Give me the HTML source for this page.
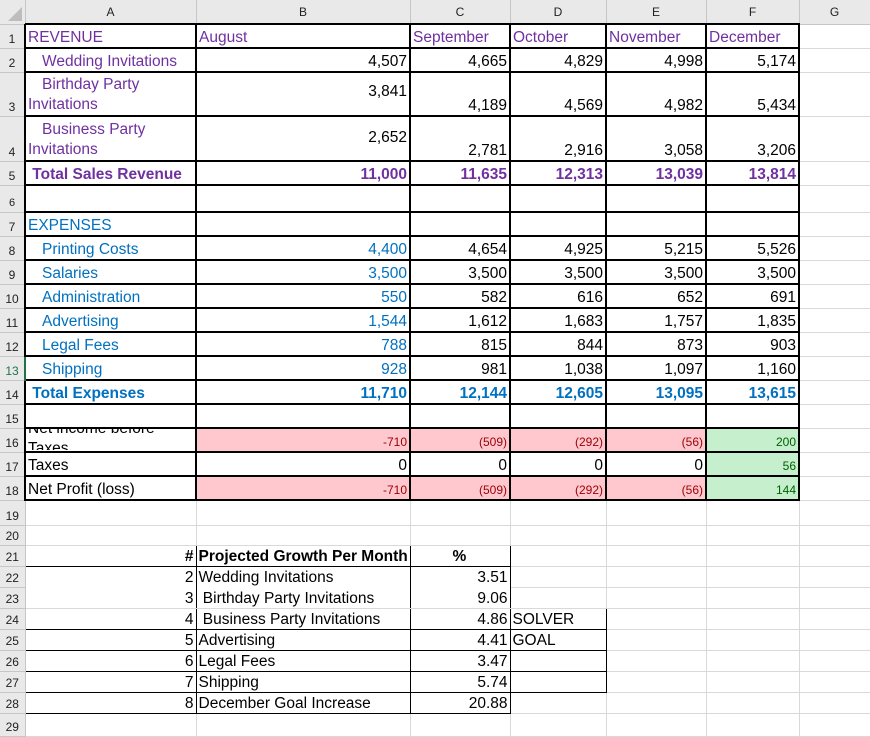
<!DOCTYPE html>
<html><head><meta charset="utf-8"><style>
*{margin:0;padding:0;box-sizing:border-box}
body{width:870px;height:737px;overflow:hidden;background:#fff;font-family:"Liberation Sans",Arial,sans-serif;font-size:15.5px;color:#000}
table{border-collapse:collapse;table-layout:fixed;width:870px}
td{border-right:1px solid #d9d9d9;border-bottom:1px solid #d9d9d9;padding:0 2px;white-space:nowrap;overflow:hidden;vertical-align:bottom;line-height:18px}
td.h{background:#e9e9e9;border-color:#c6c6c6;text-align:center;font-size:12px;color:#222;vertical-align:middle}
td.rh{background:#e9e9e9;border-color:#c6c6c6;text-align:center;font-size:12px;color:#222;padding:0;vertical-align:bottom;line-height:17px}
td.t{border:2px solid #000}
td.r{text-align:right}
.p{color:#7030a0}.bl{color:#0070c0}.b{font-weight:bold}
.ind{padding-left:16px}
td.red{background:#ffc7ce;color:#9c0006;font-size:12px}
td.grn{background:#c6efce;color:#006100;font-size:12px}
td.k{border:1px solid #000}
td.kt{border-top:1px solid #000;border-bottom:1px solid #000;border-right:1px solid #000}
td.kr{border-right:1px solid #000}
td.nb{border-bottom:1px solid transparent}
</style></head><body>
<table>
<colgroup><col style="width:25px"><col style="width:171px"><col style="width:214px"><col style="width:100px"><col style="width:96px"><col style="width:100px"><col style="width:93px"><col style="width:71px"></colgroup>
<tr style="height:24px"><td class="h" style="position:relative"><svg width="14" height="14" style="position:absolute;right:3px;bottom:3px"><polygon points="14,0 14,14 0,14" fill="#bdbdbd"/></svg></td><td class="h">A</td><td class="h">B</td><td class="h">C</td><td class="h">D</td><td class="h">E</td><td class="h">F</td><td class="h">G</td></tr>
<tr style="height:24px"><td class="rh">1</td><td class="t p">REVENUE</td><td class="t p">August</td><td class="t p">September</td><td class="t p">October</td><td class="t p">November</td><td class="t p">December</td><td></td></tr>
<tr style="height:24px"><td class="rh">2</td><td class="t p ind">Wedding Invitations</td><td class="t r">4,507</td><td class="t r">4,665</td><td class="t r">4,829</td><td class="t r">4,998</td><td class="t r">5,174</td><td></td></tr>
<tr style="height:44px"><td class="rh">3</td><td class="t p" style="white-space:normal;line-height:20px"><span style="padding-left:14px">Birthday Party</span><br>Invitations</td><td class="t r" style="vertical-align:top;padding-top:10px">3,841</td><td class="t r">4,189</td><td class="t r">4,569</td><td class="t r">4,982</td><td class="t r">5,434</td><td></td></tr>
<tr style="height:45px"><td class="rh">4</td><td class="t p" style="white-space:normal;line-height:20px"><span style="padding-left:14px">Business Party</span><br>Invitations</td><td class="t r" style="vertical-align:top;padding-top:12px">2,652</td><td class="t r">2,781</td><td class="t r">2,916</td><td class="t r">3,058</td><td class="t r">3,206</td><td></td></tr>
<tr style="height:24px"><td class="rh">5</td><td class="t p b">&nbsp;Total Sales Revenue</td><td class="t r p b">11,000</td><td class="t r p b">11,635</td><td class="t r p b">12,313</td><td class="t r p b">13,039</td><td class="t r p b">13,814</td><td></td></tr>
<tr style="height:27px"><td class="rh" style="font-size:11px">6</td><td class="t"></td><td class="t"></td><td class="t"></td><td class="t"></td><td class="t"></td><td class="t"></td><td></td></tr>
<tr style="height:24px"><td class="rh">7</td><td class="t bl">EXPENSES</td><td class="t"></td><td class="t"></td><td class="t"></td><td class="t"></td><td class="t"></td><td></td></tr>
<tr style="height:24px"><td class="rh">8</td><td class="t bl ind">Printing Costs</td><td class="t r bl">4,400</td><td class="t r">4,654</td><td class="t r">4,925</td><td class="t r">5,215</td><td class="t r">5,526</td><td></td></tr>
<tr style="height:24px"><td class="rh">9</td><td class="t bl ind">Salaries</td><td class="t r bl">3,500</td><td class="t r">3,500</td><td class="t r">3,500</td><td class="t r">3,500</td><td class="t r">3,500</td><td></td></tr>
<tr style="height:24px"><td class="rh">10</td><td class="t bl ind">Administration</td><td class="t r bl">550</td><td class="t r">582</td><td class="t r">616</td><td class="t r">652</td><td class="t r">691</td><td></td></tr>
<tr style="height:24px"><td class="rh">11</td><td class="t bl ind">Advertising</td><td class="t r bl">1,544</td><td class="t r">1,612</td><td class="t r">1,683</td><td class="t r">1,757</td><td class="t r">1,835</td><td></td></tr>
<tr style="height:24px"><td class="rh">12</td><td class="t bl ind">Legal Fees</td><td class="t r bl">788</td><td class="t r">815</td><td class="t r">844</td><td class="t r">873</td><td class="t r">903</td><td></td></tr>
<tr style="height:24px"><td class="rh" style="color:#217346;border-right:2px solid #217346">13</td><td class="t bl ind">Shipping</td><td class="t r bl">928</td><td class="t r">981</td><td class="t r">1,038</td><td class="t r">1,097</td><td class="t r">1,160</td><td></td></tr>
<tr style="height:24px"><td class="rh">14</td><td class="t bl b">&nbsp;Total Expenses</td><td class="t r bl b">11,710</td><td class="t r bl b">12,144</td><td class="t r bl b">12,605</td><td class="t r bl b">13,095</td><td class="t r bl b">13,615</td><td></td></tr>
<tr style="height:24px"><td class="rh">15</td><td class="t"></td><td class="t"></td><td class="t"></td><td class="t"></td><td class="t"></td><td class="t"></td><td></td></tr>
<tr style="height:24px"><td class="rh">16</td><td class="t" style="vertical-align:top"><div style="height:21px;overflow:hidden"><div style="margin-top:-10px;line-height:20px;white-space:normal">Net income before<br>Taxes</div></div></td><td class="t r red">-710</td><td class="t r red">(509)</td><td class="t r red">(292)</td><td class="t r red">(56)</td><td class="t r grn">200</td><td></td></tr>
<tr style="height:24px"><td class="rh">17</td><td class="t">Taxes</td><td class="t r">0</td><td class="t r">0</td><td class="t r">0</td><td class="t r">0</td><td class="t r grn">56</td><td></td></tr>
<tr style="height:24px"><td class="rh">18</td><td class="t">Net Profit (loss)</td><td class="t r red">-710</td><td class="t r red">(509)</td><td class="t r red">(292)</td><td class="t r red">(56)</td><td class="t r grn">144</td><td></td></tr>
<tr style="height:25px"><td class="rh">19</td><td></td><td></td><td></td><td></td><td></td><td></td><td></td></tr>
<tr style="height:20px"><td class="rh">20</td><td></td><td></td><td></td><td></td><td></td><td></td><td></td></tr>
<tr style="height:21px"><td class="rh">21</td><td class="kt r b">#</td><td class="k b">Projected Growth Per Month</td><td class="k b" style="padding-left:42px">%</td><td></td><td></td><td></td><td></td></tr>
<tr style="height:21px"><td class="rh">22</td><td class="kr r nb" style="border-top:1px solid #000">2</td><td class="kr nb" style="border-left:1px solid #000;border-top:1px solid #000">Wedding Invitations</td><td class="kr r nb" style="border-top:1px solid #000">3.51</td><td></td><td></td><td></td><td></td></tr>
<tr style="height:21px"><td class="rh">23</td><td class="kr r">3</td><td class="kr" style="border-left:1px solid #000">&nbsp;Birthday Party Invitations</td><td class="kr r">9.06</td><td></td><td></td><td></td><td></td></tr>
<tr style="height:21px"><td class="rh">24</td><td class="kt r">4</td><td class="k">&nbsp;Business Party Invitations</td><td class="k r">4.86</td><td class="k">SOLVER</td><td></td><td></td><td></td></tr>
<tr style="height:21px"><td class="rh">25</td><td class="kt r">5</td><td class="k">Advertising</td><td class="k r">4.41</td><td class="k">GOAL</td><td></td><td></td><td></td></tr>
<tr style="height:21px"><td class="rh">26</td><td class="kt r">6</td><td class="k">Legal Fees</td><td class="k r">3.47</td><td class="k"></td><td></td><td></td><td></td></tr>
<tr style="height:21px"><td class="rh">27</td><td class="kt r">7</td><td class="k">Shipping</td><td class="k r">5.74</td><td class="k"></td><td></td><td></td><td></td></tr>
<tr style="height:21px"><td class="rh">28</td><td class="kt r">8</td><td class="k">December Goal Increase</td><td class="k r">20.88</td><td></td><td></td><td></td><td></td></tr>
<tr style="height:23px"><td class="rh">29</td><td></td><td></td><td></td><td></td><td></td><td></td><td></td></tr>
</table>
</body></html>
